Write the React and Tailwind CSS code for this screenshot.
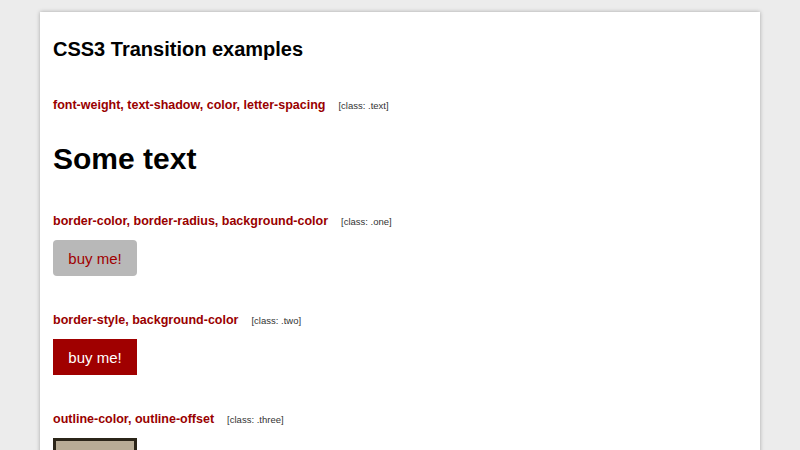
// CSS3 transition demo page: a white card with one heading per example
const Example = ({ props, cls, gap = "mt-[10px]", children }) => (
  <section className="mb-[35px]">
    <div className="flex items-baseline h-[18px]">
      <h3 className="text-[12.5px] leading-[18px] font-bold text-[#990000]">{props}</h3>
      <span className="ml-[13px] text-[9.5px] text-[#333]">[class: {cls}]</span>
    </div>
    <div className={gap}>{children}</div>
  </section>
);

const Btn = ({ className }) => (
  <button className={`w-[84px] h-[36px] text-[15px] leading-none ${className}`}>buy me!</button>
);

export default function App() {
  return (
    <div
      className="min-h-[450px] bg-[#ececec] pt-[12px]"
      style={{ fontFamily: '"Liberation Sans", Arial, sans-serif' }}
    >
      <div className="mx-auto w-[720px] min-h-[450px] bg-white px-[13px] pt-[25px] shadow-[0_0_4px_rgba(0,0,0,0.3)]">
        <h1 className="text-[20px] leading-[25px] font-bold text-black">CSS3 Transition examples</h1>

        <div className="mt-[34px]">
          <Example props="font-weight, text-shadow, color, letter-spacing" cls=".text" gap="mt-[27px]">
            <p className="text-[30px] leading-[36px] font-bold text-black">Some text</p>
          </Example>

          <Example props="border-color, border-radius, background-color" cls=".one">
            <Btn className="bg-[#b8b8b8] text-[#a00000] rounded-[4px]" />
          </Example>

          <Example props="border-style, background-color" cls=".two">
            <Btn className="bg-[#a00000] text-white" />
          </Example>

          <Example props="outline-color, outline-offset" cls=".three">
            <Btn className="bg-[#b8ac96] text-[#a00000] border-[3px] border-[#2b2519]" />
          </Example>
        </div>
      </div>
    </div>
  );
}
